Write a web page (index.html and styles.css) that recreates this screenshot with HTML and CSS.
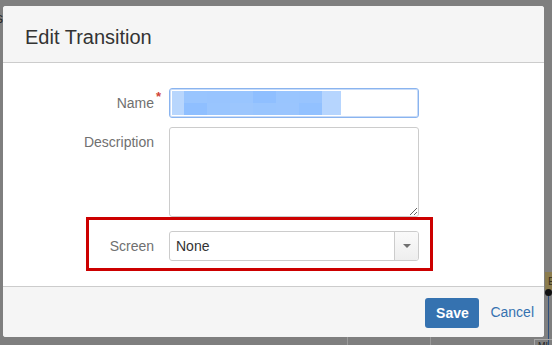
FILE: index.html
```html
<!DOCTYPE html>
<html>
<head>
<meta charset="utf-8">
<link rel="stylesheet" href="styles.css">
</head>
<body>
<div class="backdrop">
  <span class="bg-s">s</span>
  <div class="bg-status">EN</div>
  <div class="bg-dot"></div>
  <div class="bg-line"></div>
  <div class="bg-vline bg-v1"></div>
  <div class="bg-vline bg-v2"></div>
  <div class="bg-box">MI</div>
</div>
<div class="dialog">
  <div class="header"><h2 class="title">Edit Transition</h2></div>
  <div class="body">
    <div class="row">
      <label class="label">Name<span class="req">*</span></label>
      <div class="field input focused">
        <div class="redact">
          <div class="rrow">
            <i style="width:12px;background:#b8d6fd"></i><i style="width:23px;background:#99c5fe"></i><i style="width:23px;background:#98c4fe"></i><i style="width:23px;background:#99c5fe"></i><i style="width:23px;background:#8fbfff"></i><i style="width:23px;background:#99c5fe"></i><i style="width:23px;background:#98c4fe"></i><i style="width:19px;background:#b6d5fe"></i>
          </div>
          <div class="rrow">
            <i style="width:12px;background:#b8d6fd"></i><i style="width:23px;background:#8fbfff"></i><i style="width:23px;background:#99c5fe"></i><i style="width:23px;background:#9cc6fd"></i><i style="width:23px;background:#99c5fe"></i><i style="width:23px;background:#9ac5fe"></i><i style="width:23px;background:#92c1ff"></i><i style="width:19px;background:#b6d5fe"></i>
          </div>
        </div>
      </div>
    </div>
    <div class="row row-desc">
      <label class="label">Description</label>
      <textarea class="field textarea"></textarea>
    </div>
    <div class="row row-screen">
      <label class="label">Screen</label>
      <div class="field select">
        <span class="select-text">None</span>
        <span class="select-btn"><span class="arrow"></span></span>
      </div>
    </div>
    <div class="annotation"></div>
  </div>
  <div class="footer">
    <button class="btn-save">Save</button>
    <a class="cancel">Cancel</a>
  </div>
</div>
</body>
</html>
```
FILE: styles.css
```css
html, body {
  margin: 0;
  padding: 0;
}
body {
  width: 552px;
  height: 345px;
  overflow: hidden;
  position: relative;
  background: #7f7f7f;
  font-family: "Liberation Sans", Arial, sans-serif;
  font-size: 14px;
}
.backdrop {
  position: absolute;
  inset: 0;
}
.bg-s {
  position: absolute;
  left: -4px;
  top: 10px;
  font-size: 14px;
  color: #2a2a2a;
}
.bg-status {
  position: absolute;
  left: 545px;
  top: 272px;
  width: 20px;
  height: 18px;
  background: #8b7c4e;
  color: #3a3220;
  font-size: 11px;
  line-height: 18px;
  padding-left: 3px;
  box-sizing: border-box;
}
.bg-dot {
  position: absolute;
  left: 545px;
  top: 289px;
  width: 7px;
  height: 7px;
  border-radius: 50%;
  background: #111;
}
.bg-line {
  position: absolute;
  left: 548px;
  top: 296px;
  width: 1px;
  height: 49px;
  background: #2c4d7a;
}
.bg-vline {
  position: absolute;
  top: 337px;
  width: 1px;
  height: 8px;
  background: #9a9a9a;
}
.bg-v1 { left: 347px; }
.bg-v2 { left: 430px; }
.bg-box {
  position: absolute;
  left: 534px;
  top: 339px;
  width: 30px;
  height: 12px;
  border: 1px solid #a8a8a8;
  font-size: 9px;
  color: #222;
  padding-left: 3px;
}

.dialog {
  position: absolute;
  left: 3px;
  top: 6px;
  width: 541px;
  height: 331px;
  background: #fff;
  border-radius: 3px;
  overflow: hidden;
  display: flex;
  flex-direction: column;
}
.header {
  height: 36px;
  padding: 20px 22px 0;
  background: #f5f5f5;
  border-bottom: 1px solid #cccccc;
}
.title {
  margin: 0;
  font-size: 20px;
  font-weight: normal;
  line-height: 23px;
  color: #333333;
}
.body {
  position: relative;
  flex: 1;
  padding: 25px 0 0;
}
.row {
  display: flex;
  align-items: flex-start;
  gap: 15px;
}
.row-desc { margin-top: 9px; }
.row-screen { margin-top: 14px; }
.label {
  position: relative;
  width: 151px;
  text-align: right;
  line-height: 30px;
  color: #707070;
}
.req {
  position: absolute;
  right: -7px;
  top: -6px;
  color: #d04437;
  font-size: 13px;
  font-weight: bold;
}
.field {
  box-sizing: border-box;
  width: 250px;
  border: 1px solid #cccccc;
  border-radius: 3px;
  background: #fff;
}
.input {
  height: 30px;
  padding: 2px;
}
.focused {
  border-color: #8ab4ef;
  box-shadow: inset 0 0 0 1px #c9dcf8;
}
.redact {
  display: flex;
  flex-direction: column;
}
.rrow {
  display: flex;
  height: 12px;
}
.rrow i {
  display: block;
  height: 12px;
}
.textarea {
  display: block;
  height: 90px;
  margin: 0;
  padding: 4px 5px;
  font-family: inherit;
  font-size: 14px;
  resize: both;
  outline: none;
}
.select {
  height: 30px;
  display: flex;
  align-items: stretch;
  overflow: hidden;
}
.select-text {
  flex: 1;
  padding-left: 6px;
  line-height: 28px;
  color: #333333;
  font-size: 14px;
}
.select-btn {
  width: 23px;
  border-left: 1px solid #cccccc;
  background: linear-gradient(#fafafa, #eeeeee);
  display: flex;
  align-items: center;
  justify-content: center;
}
.arrow {
  width: 0;
  height: 0;
  border-left: 4px solid transparent;
  border-right: 4px solid transparent;
  border-top: 4px solid #707070;
  margin-top: -1px;
}
.annotation {
  position: absolute;
  left: 83px;
  top: 154px;
  width: 347px;
  height: 54px;
  box-sizing: border-box;
  border: 3px solid #cc0000;
}
.footer {
  height: 50px;
  border-top: 1px solid #cccccc;
  background: #f5f5f5;
  display: flex;
  align-items: center;
  justify-content: flex-end;
  padding-right: 10px;
  gap: 11px;
}
.btn-save {
  width: 54px;
  height: 30px;
  margin-top: 1px;
  border: 0;
  border-radius: 3px;
  background: #3572b0;
  color: #fff;
  font-family: inherit;
  font-size: 14px;
  font-weight: bold;
  padding: 0;
}
.cancel {
  color: #3572b0;
  font-size: 14px;
  line-height: 30px;
}
```
